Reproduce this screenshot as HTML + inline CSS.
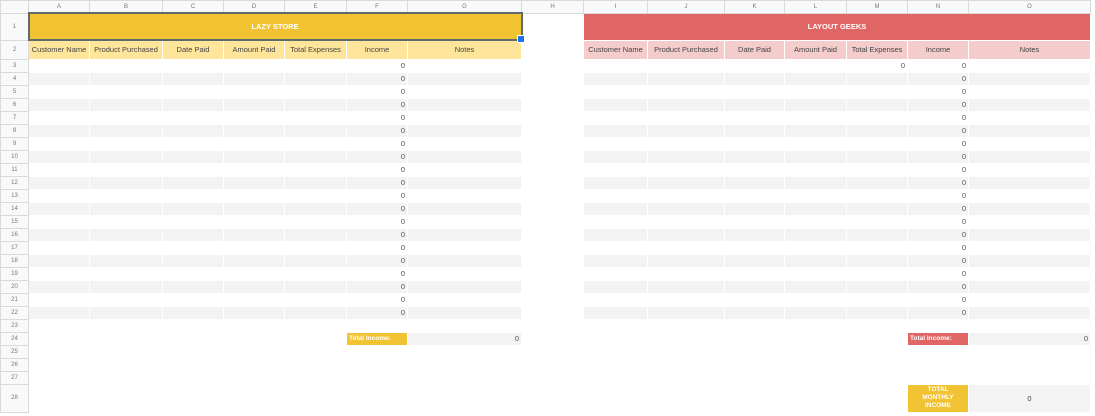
<!DOCTYPE html><html><head><style>
body{margin:0;background:#fff;font-family:"Liberation Sans",sans-serif;width:1095px;height:416px;overflow:hidden}
table{border-collapse:collapse;table-layout:fixed;position:absolute;left:0;top:0;width:1090px}
td,th{border:1px solid transparent;padding:0 2px;font-size:7.5px;color:#444;overflow:hidden;white-space:nowrap;font-weight:normal}
th{background:#f8f9fa;color:#777;font-size:6px;text-align:center;border-color:#dadada}
thead th{height:11px}
tr.d{height:13px} tr.d td{line-height:11px}
tr.g td:not(.h){background:#f3f3f3;border-color:#fff}
tr.w td:not(.h){border-color:transparent}
.h{border-color:transparent}
.r{text-align:right;color:#555}
.yb{background:#f1c232;color:#fff;font-weight:bold;text-align:center;border:2px solid #5f6a6a !important}
.rb{background:#e06666;color:#fff;font-weight:bold;text-align:center;border-color:#fff}
.yh td.c{background:#ffe599;text-align:center;border-color:#fff}
.yh td.p{background:#f4cccc;text-align:center;border-color:#fff}
.lab{color:#fff;font-weight:bold;font-size:6.5px}
</style></head><body>
<table>
<colgroup><col style="width:28px"><col style="width:61px"><col style="width:73px"><col style="width:61px"><col style="width:61px"><col style="width:62px"><col style="width:61px"><col style="width:114px"><col style="width:62px"><col style="width:64px"><col style="width:77px"><col style="width:60px"><col style="width:62px"><col style="width:61px"><col style="width:61px"><col style="width:122px"></colgroup>
<thead><tr><th></th><th>A</th><th>B</th><th>C</th><th>D</th><th>E</th><th>F</th><th>G</th><th>H</th><th>I</th><th>J</th><th>K</th><th>L</th><th>M</th><th>N</th><th>O</th></tr></thead>
<tbody>
<tr style="height:27px"><th>1</th><td colspan="7" class="yb">LAZY STORE</td><td class="h"></td><td colspan="7" class="rb">LAYOUT GEEKS</td></tr>
<tr style="height:19px" class="yh"><th>2</th><td class="c">Customer Name</td><td class="c">Product Purchased</td><td class="c">Date Paid</td><td class="c">Amount Paid</td><td class="c">Total Expenses</td><td class="c">Income</td><td class="c">Notes</td><td class="h"></td><td class="p">Customer Name</td><td class="p">Product Purchased</td><td class="p">Date Paid</td><td class="p">Amount Paid</td><td class="p">Total Expenses</td><td class="p">Income</td><td class="p">Notes</td></tr>
<tr class="d w"><th>3</th><td></td><td></td><td></td><td></td><td></td><td class="r">0</td><td></td><td class="h"></td><td></td><td></td><td></td><td></td><td class="r">0</td><td class="r">0</td><td></td></tr>
<tr class="d g"><th>4</th><td></td><td></td><td></td><td></td><td></td><td class="r">0</td><td></td><td class="h"></td><td></td><td></td><td></td><td></td><td></td><td class="r">0</td><td></td></tr>
<tr class="d w"><th>5</th><td></td><td></td><td></td><td></td><td></td><td class="r">0</td><td></td><td class="h"></td><td></td><td></td><td></td><td></td><td></td><td class="r">0</td><td></td></tr>
<tr class="d g"><th>6</th><td></td><td></td><td></td><td></td><td></td><td class="r">0</td><td></td><td class="h"></td><td></td><td></td><td></td><td></td><td></td><td class="r">0</td><td></td></tr>
<tr class="d w"><th>7</th><td></td><td></td><td></td><td></td><td></td><td class="r">0</td><td></td><td class="h"></td><td></td><td></td><td></td><td></td><td></td><td class="r">0</td><td></td></tr>
<tr class="d g"><th>8</th><td></td><td></td><td></td><td></td><td></td><td class="r">0</td><td></td><td class="h"></td><td></td><td></td><td></td><td></td><td></td><td class="r">0</td><td></td></tr>
<tr class="d w"><th>9</th><td></td><td></td><td></td><td></td><td></td><td class="r">0</td><td></td><td class="h"></td><td></td><td></td><td></td><td></td><td></td><td class="r">0</td><td></td></tr>
<tr class="d g"><th>10</th><td></td><td></td><td></td><td></td><td></td><td class="r">0</td><td></td><td class="h"></td><td></td><td></td><td></td><td></td><td></td><td class="r">0</td><td></td></tr>
<tr class="d w"><th>11</th><td></td><td></td><td></td><td></td><td></td><td class="r">0</td><td></td><td class="h"></td><td></td><td></td><td></td><td></td><td></td><td class="r">0</td><td></td></tr>
<tr class="d g"><th>12</th><td></td><td></td><td></td><td></td><td></td><td class="r">0</td><td></td><td class="h"></td><td></td><td></td><td></td><td></td><td></td><td class="r">0</td><td></td></tr>
<tr class="d w"><th>13</th><td></td><td></td><td></td><td></td><td></td><td class="r">0</td><td></td><td class="h"></td><td></td><td></td><td></td><td></td><td></td><td class="r">0</td><td></td></tr>
<tr class="d g"><th>14</th><td></td><td></td><td></td><td></td><td></td><td class="r">0</td><td></td><td class="h"></td><td></td><td></td><td></td><td></td><td></td><td class="r">0</td><td></td></tr>
<tr class="d w"><th>15</th><td></td><td></td><td></td><td></td><td></td><td class="r">0</td><td></td><td class="h"></td><td></td><td></td><td></td><td></td><td></td><td class="r">0</td><td></td></tr>
<tr class="d g"><th>16</th><td></td><td></td><td></td><td></td><td></td><td class="r">0</td><td></td><td class="h"></td><td></td><td></td><td></td><td></td><td></td><td class="r">0</td><td></td></tr>
<tr class="d w"><th>17</th><td></td><td></td><td></td><td></td><td></td><td class="r">0</td><td></td><td class="h"></td><td></td><td></td><td></td><td></td><td></td><td class="r">0</td><td></td></tr>
<tr class="d g"><th>18</th><td></td><td></td><td></td><td></td><td></td><td class="r">0</td><td></td><td class="h"></td><td></td><td></td><td></td><td></td><td></td><td class="r">0</td><td></td></tr>
<tr class="d w"><th>19</th><td></td><td></td><td></td><td></td><td></td><td class="r">0</td><td></td><td class="h"></td><td></td><td></td><td></td><td></td><td></td><td class="r">0</td><td></td></tr>
<tr class="d g"><th>20</th><td></td><td></td><td></td><td></td><td></td><td class="r">0</td><td></td><td class="h"></td><td></td><td></td><td></td><td></td><td></td><td class="r">0</td><td></td></tr>
<tr class="d w"><th>21</th><td></td><td></td><td></td><td></td><td></td><td class="r">0</td><td></td><td class="h"></td><td></td><td></td><td></td><td></td><td></td><td class="r">0</td><td></td></tr>
<tr class="d g"><th>22</th><td></td><td></td><td></td><td></td><td></td><td class="r">0</td><td></td><td class="h"></td><td></td><td></td><td></td><td></td><td></td><td class="r">0</td><td></td></tr>
<tr class="d w"><th>23</th><td></td><td></td><td></td><td></td><td></td><td></td><td></td><td class="h"></td><td></td><td></td><td></td><td></td><td></td><td></td><td></td></tr>
<tr class="d w"><th>24</th><td></td><td></td><td></td><td></td><td></td><td class="lab" style="background:#f1c232">Total Income:</td><td class="r" style="background:#f3f3f3">0</td><td class="h"></td><td></td><td></td><td></td><td></td><td></td><td class="lab" style="background:#e06666">Total Income:</td><td class="r" style="background:#f3f3f3">0</td></tr>
<tr class="d w"><th>25</th><td></td><td></td><td></td><td></td><td></td><td></td><td></td><td class="h"></td><td></td><td></td><td></td><td></td><td></td><td></td><td></td></tr>
<tr class="d w"><th>26</th><td></td><td></td><td></td><td></td><td></td><td></td><td></td><td class="h"></td><td></td><td></td><td></td><td></td><td></td><td></td><td></td></tr>
<tr class="d w"><th>27</th><td></td><td></td><td></td><td></td><td></td><td></td><td></td><td class="h"></td><td></td><td></td><td></td><td></td><td></td><td></td><td></td></tr>
<tr style="height:28px" class="w"><th>28</th><td></td><td></td><td></td><td></td><td></td><td></td><td></td><td class="h"></td><td></td><td></td><td></td><td></td><td></td><td class="lab" style="background:#f1c232;text-align:center;white-space:normal;line-height:8px;font-size:6.5px;padding:0 12px">TOTAL MONTHLY INCOME</td><td style="background:#f3f3f3;text-align:center">0</td></tr>
</tbody></table>
<div style="position:absolute;left:517px;top:35px;width:6px;height:6px;background:#1a73e8;border:1px solid #fff"></div>
</body></html>
